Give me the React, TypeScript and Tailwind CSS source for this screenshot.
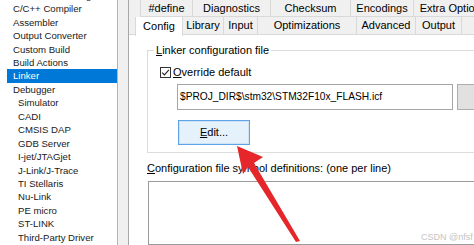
import React from "react";

const items: { label: string; sub?: boolean; selected?: boolean }[] = [
  { label: "Runtime Checking" },
  { label: "C/C++ Compiler" },
  { label: "Assembler" },
  { label: "Output Converter" },
  { label: "Custom Build" },
  { label: "Build Actions" },
  { label: "Linker", selected: true },
  { label: "Debugger" },
  { label: "Simulator", sub: true },
  { label: "CADI", sub: true },
  { label: "CMSIS DAP", sub: true },
  { label: "GDB Server", sub: true },
  { label: "I-jet/JTAGjet", sub: true },
  { label: "J-Link/J-Trace", sub: true },
  { label: "TI Stellaris", sub: true },
  { label: "Nu-Link", sub: true },
  { label: "PE micro", sub: true },
  { label: "ST-LINK", sub: true },
  { label: "Third-Party Driver", sub: true },
];

const row1 = [
  { label: "#define", w: "w-[53px]" },
  { label: "Diagnostics", w: "w-[79px]" },
  { label: "Checksum", w: "w-[81px]" },
  { label: "Encodings", w: "w-[64px]" },
  { label: "Extra Options", w: "w-[80px]" },
];

const row2 = [
  { label: "Config", w: "w-[48px]", sel: true },
  { label: "Library", w: "w-[42px]" },
  { label: "Input", w: "w-[35px]" },
  { label: "Optimizations", w: "w-[100px]" },
  { label: "Advanced", w: "w-[60px]" },
  { label: "Output", w: "w-[47px]" },
  { label: "", w: "w-[40px]" },
];

export default function App() {
  return (
    <div
      className="relative flex w-[474px] h-[245px] overflow-hidden bg-[#f0f0f0] text-black"
      style={{ fontFamily: '"Liberation Sans", Arial, sans-serif' }}
    >
      {/* Category list */}
      <div className="w-[118px] h-full shrink-0 bg-white border-r border-[#b4b4b4] overflow-hidden">
        <div className="-mt-[11.2px] flex flex-col">
          {items.map((it) => (
            <div
              key={it.label}
              className={
                "h-[13.45px] leading-[13.45px] text-[9.6px] whitespace-nowrap ml-[7px] " +
                (it.sub ? "pl-[11px] " : "pl-[6px] ") +
                (it.selected ? "bg-[#0078d7] text-white" : "text-[#1a1a1a]")
              }
            >
              {it.label}
            </div>
          ))}
        </div>
      </div>

      {/* gap */}
      <div className="w-[10px] shrink-0" />

      {/* Tab control */}
      <div className="flex-1 h-full flex flex-col border-l border-[#a8a8a8] overflow-hidden">
        {/* Tab row 1 */}
        <div className="flex h-[17px] pl-[11px] shrink-0">
          {row1.map((t) => (
            <div
              key={t.label}
              className={
                t.w +
                " shrink-0 h-[18px] -mt-[1px] flex items-center justify-center text-[11px] whitespace-nowrap bg-[#f0f0f0] border-l border-r border-b border-[#d9d9d9] -mr-[1px] pt-[1px]"
              }
            >
              {t.label}
            </div>
          ))}
        </div>
        {/* Tab row 2 */}
        <div className="flex h-[18px] pl-[6px] shrink-0 relative z-10">
          {row2.map((t, i) => (
            <div
              key={i}
              className={
                t.w +
                " shrink-0 flex items-center justify-center text-[11px] whitespace-nowrap -mr-[1px] border-l border-r " +
                (t.sel
                  ? "bg-white border-[#d9d9d9] h-[19px] border-t-0"
                  : "bg-[#f0f0f0] border-[#d9d9d9] h-[18px] border-b")
              }
            >
              {t.label}
            </div>
          ))}
        </div>
        {/* Content */}
        <div className="flex-1 bg-white border-t border-[#d9d9d9] -mt-[1px] flex flex-col">
          {/* Group box */}
          <div className="relative ml-[18px] mt-[15px] w-[340px] h-[103px] shrink-0 border border-[#dcdcdc] flex flex-col pl-[12px]">
            <div className="absolute -top-[8px] left-[6px] bg-white px-[2px] text-[11px] leading-[14px] whitespace-nowrap">
              <span className="underline">L</span>inker configuration file
            </div>
            <div className="mt-[16px] flex items-center h-[11px]">
              <svg width="11" height="11" viewBox="0 0 11 11" className="shrink-0">
                <rect x="0.5" y="0.5" width="10" height="10" fill="white" stroke="#333" />
                <path d="M2.2 5.6 L4.4 7.9 L8.9 2.9" fill="none" stroke="#222" strokeWidth="1.1" />
              </svg>
              <span className="ml-[2px] text-[11px] whitespace-nowrap">
                <span className="underline">O</span>verride default
              </span>
            </div>
            <div className="mt-[6px] flex items-center">
              <div className="ml-[17px] w-[289px] h-[26px] border border-[#a6a6a6] flex items-center pl-[2px] text-[10.2px] whitespace-nowrap">
                $PROJ_DIR$\stm32\STM32F10x_FLASH.icf
              </div>
              <div className="ml-[4px] w-[30px] h-[26px] border border-[#adadad] bg-[#e1e1e1]" />
            </div>
            <div className="mt-[10px] ml-[18px] w-[72px] h-[25px] border border-[#5ea3e6] bg-[#e5f1fb] flex items-center justify-center text-[11px] outline outline-1 outline-[#cfe3f7] -outline-offset-2">
              <span className="underline">E</span>dit...
            </div>
          </div>
          {/* Label */}
          <div className="ml-[18px] mt-[8px] text-[11px] leading-[14px] whitespace-nowrap">
            <span className="underline">C</span>onfiguration file symbol definitions: (one per line)
          </div>
          {/* Textarea */}
          <div className="ml-[19px] mt-[6px] w-[340px] flex-1 border border-[#9a9a9a] bg-white" />
        </div>
      </div>

      {/* Watermark */}
      <div className="absolute left-[421px] top-[231px] text-[9px] text-[#c4c4c4] whitespace-nowrap">
        CSDN @nfsf
      </div>

      {/* Red arrow annotation */}
      <svg
        className="absolute left-0 top-0 pointer-events-none"
        width="474"
        height="245"
        viewBox="0 0 474 245"
      >
        <polygon
          points="237,146 263,157 254,163 300,241 296,242 248,167 243,174"
          fill="#e5262a"
        />
      </svg>
    </div>
  );
}
